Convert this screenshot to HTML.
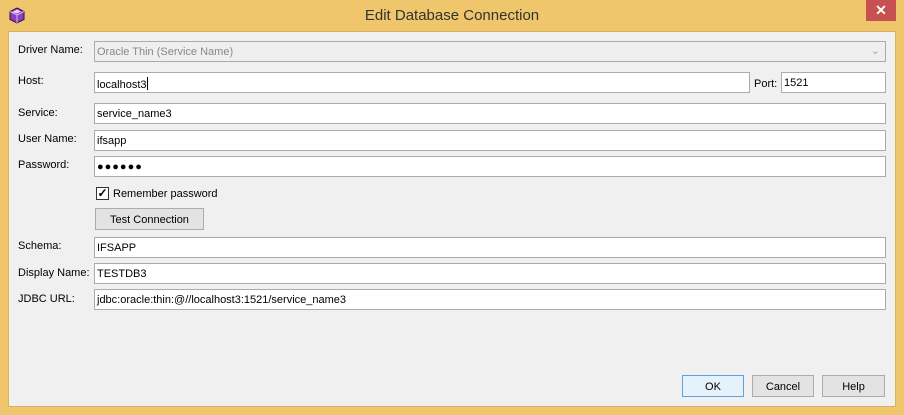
<!DOCTYPE html><html><head><style>
body{margin:0;width:904px;height:415px;background:#efc66c;font-family:"Liberation Sans",sans-serif;font-size:12px;color:#000;position:relative;overflow:hidden}
.c{position:absolute;left:8px;top:31px;width:888px;height:376px;background:#f0f0f0;border:1px solid #d8b35f;box-sizing:border-box}
.a{position:absolute}
.l{position:absolute;left:18px;font-size:11px}
.f{position:absolute;background:#fff;border:1px solid #ababab;box-sizing:border-box;height:21px;padding:4px 0 0 2px;font-size:11px}
.b{position:absolute;background:#e3e3e3;border:1px solid #acacac;box-sizing:border-box;height:22px;text-align:center;padding-top:5px;font-size:11px}
</style></head><body>
<div class="a" style="left:0;top:0;width:904px;height:31px;text-align:center;line-height:32px;font-size:15px;color:#333">Edit Database Connection</div>
<svg class="a" style="left:9px;top:7px" width="16" height="17" viewBox="0 0 16 17"><path d="M8 1 L15 4.5 L15 12.5 L8 16 L1 12.5 L1 4.5Z" fill="#8c3fbf" stroke="#2a1040"/><path d="M1 4.5 L8 8 L15 4.5 M8 8 L8 16" stroke="#d8b8f0" fill="none"/><path d="M3 5 L8 2.5 L12 4.5 L8 6.5Z" fill="#e6d0f5"/></svg>
<div class="a" style="left:866px;top:0;width:30px;height:21px;background:#c75050;color:#fff;text-align:center;font-size:14px;line-height:21px;font-weight:bold">✕</div>
<div class="c"></div>
<div class="l" style="top:44px">Driver Name:</div>
<div class="f" style="left:94px;top:41px;width:792px;background:#efefef;color:#888">Oracle Thin (Service Name)<span style="position:absolute;right:5px;top:2px;color:#aaa">⌄</span></div>
<div class="l" style="top:75px">Host:</div>
<div class="f" style="left:94px;top:72px;width:656px">localhost3<span style="display:inline-block;width:1px;height:13px;background:#000;vertical-align:-2px"></span></div>
<div class="a" style="left:754px;top:78px;font-size:11px">Port:</div>
<div class="f" style="left:781px;top:72px;width:105px">1521</div>
<div class="l" style="top:107px">Service:</div>
<div class="f" style="left:94px;top:103px;width:792px">service_name3</div>
<div class="l" style="top:133px">User Name:</div>
<div class="f" style="left:94px;top:130px;width:792px">ifsapp</div>
<div class="l" style="top:159px">Password:</div>
<div class="f" style="left:94px;top:156px;width:792px;letter-spacing:1px">●●●●●●</div>
<div class="a" style="left:96px;top:187px;width:13px;height:13px;background:#fff;border:1px solid #333;box-sizing:border-box;font-size:12px;line-height:11px;text-align:center;font-weight:bold">✓</div>
<div class="a" style="left:113px;top:188px;font-size:11px">Remember password</div>
<div class="b" style="left:95px;top:208px;width:109px">Test Connection</div>
<div class="l" style="top:240px">Schema:</div>
<div class="f" style="left:94px;top:237px;width:792px">IFSAPP</div>
<div class="l" style="top:267px">Display Name:</div>
<div class="f" style="left:94px;top:263px;width:792px">TESTDB3</div>
<div class="l" style="top:293px">JDBC URL:</div>
<div class="f" style="left:94px;top:289px;width:792px">jdbc:oracle:thin:@//localhost3:1521/service_name3</div>
<div class="b" style="left:682px;top:375px;width:62px;background:#e5f1fb;border-color:#5fa2e0">OK</div>
<div class="b" style="left:752px;top:375px;width:62px">Cancel</div>
<div class="b" style="left:822px;top:375px;width:63px">Help</div>
</body></html>
